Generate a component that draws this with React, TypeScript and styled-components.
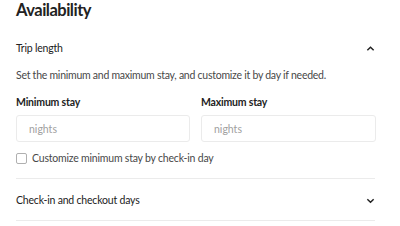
import React from "react";
import styled, { createGlobalStyle } from "styled-components";

const Global = createGlobalStyle`
  html, body { margin: 0; padding: 0; background: #fff; }
  body { font-family: Lato, "Noto Sans", sans-serif; color: #222; }
  * { box-sizing: border-box; }
`;

const Page = styled.div`
  width: 400px;
  padding: 0 25px 0 16px;
  display: flex;
  flex-direction: column;
`;

const Title = styled.h1`
  margin: 0;
  height: 22px;
  line-height: 20px;
  font-size: 16.5px;
  font-weight: 700;
  letter-spacing: -0.5px;
  color: #222;
`;

const Section = styled.div`
  display: flex;
  flex-direction: column;
`;

const SectionHeader = styled.div<{ $top: number; $h: number }>`
  display: flex;
  align-items: center;
  justify-content: space-between;
  margin-top: ${(p) => p.$top}px;
  height: ${(p) => p.$h}px;
  font-size: 10.5px;
  letter-spacing: -0.2px;
  color: #222;
`;

const Chevron = styled.svg`
  width: 9px;
  height: 9px;
`;

const Desc = styled.p`
  margin: 10px 0 0;
  font-size: 10.5px;
  letter-spacing: -0.25px;
  line-height: 14px;
  color: #484848;
`;

const Fields = styled.div`
  display: grid;
  grid-template-columns: 174px 175px;
  column-gap: 11px;
  margin-top: 13px;
`;

const Field = styled.div`
  display: flex;
  flex-direction: column;
`;

const Label = styled.label`
  font-size: 10.5px;
  font-weight: 700;
  letter-spacing: -0.2px;
  line-height: 14px;
  color: #222;
  margin-bottom: 6px;
`;

const Input = styled.input`
  height: 27px;
  border: 1px solid #ebebeb;
  border-radius: 3px;
  padding: 0 12px;
  font-family: inherit;
  font-size: 10.5px;
  color: #222;
  outline: none;
  &::placeholder { color: #a0a0a0; }
`;

const CheckRow = styled.label`
  display: flex;
  align-items: center;
  gap: 5px;
  margin-top: 10px;
  font-size: 10.5px;
  letter-spacing: -0.2px;
  color: #484848;
`;

const Box = styled.span`
  width: 11px;
  height: 11px;
  border: 1px solid #b0b0b0;
  border-radius: 2px;
  background: #fff;
`;

const Divider = styled.div<{ $top: number }>`
  height: 1px;
  background: #ebebeb;
  margin-top: ${(p) => p.$top}px;
`;

const Up = () => (
  <Chevron viewBox="0 0 10 10">
    <path d="M1.5 7 L5 3.5 L8.5 7" fill="none" stroke="#222" strokeWidth="1.6" />
  </Chevron>
);
const Down = () => (
  <Chevron viewBox="0 0 10 10">
    <path d="M1.5 3.5 L5 7 L8.5 3.5" fill="none" stroke="#222" strokeWidth="1.6" />
  </Chevron>
);

export default function App() {
  return (
    <>
      <Global />
      <Page>
        <Title>Availability</Title>
        <Section>
          <SectionHeader $top={16} $h={20}>
            <span>Trip length</span>
            <Up />
          </SectionHeader>
          <Desc>Set the minimum and maximum stay, and customize it by day if needed.</Desc>
          <Fields>
            <Field>
              <Label>Minimum stay</Label>
              <Input placeholder="nights" />
            </Field>
            <Field>
              <Label>Maximum stay</Label>
              <Input placeholder="nights" />
            </Field>
          </Fields>
          <CheckRow>
            <Box />
            Customize minimum stay by check-in day
          </CheckRow>
        </Section>
        <Divider $top={14} />
        <SectionHeader $top={11} $h={20}>
          <span>Check-in and checkout days</span>
          <Down />
        </SectionHeader>
        <Divider $top={10} />
      </Page>
    </>
  );
}
